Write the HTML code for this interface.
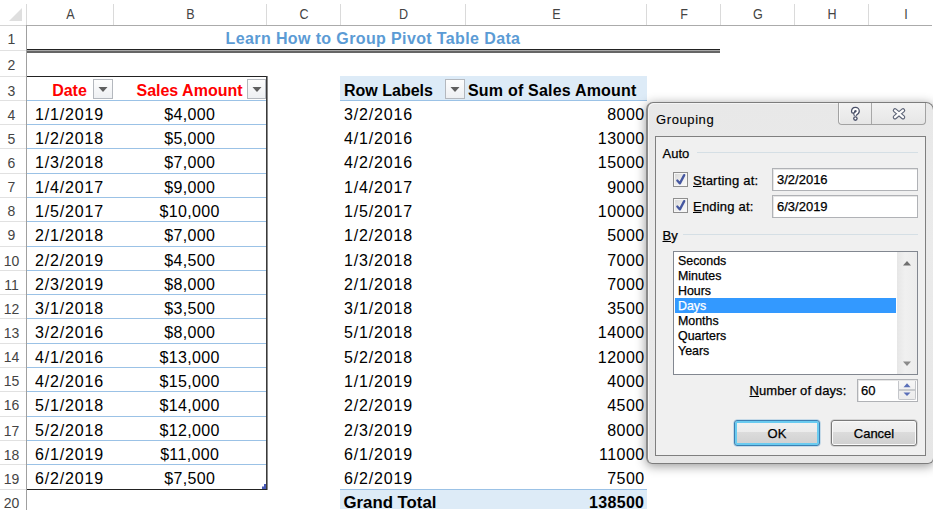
<!DOCTYPE html><html><head><meta charset="utf-8"><style>
*{margin:0;padding:0;box-sizing:border-box}
html,body{width:938px;height:515px;overflow:hidden;background:#fff}
body{position:relative;font-family:"Liberation Sans",sans-serif}
.a{position:absolute}
.t{white-space:nowrap}

.dd{width:20px;height:20px;border:1px solid #b4b8be;background:linear-gradient(#fdfdfd,#eef0f3)}
.dd svg{position:absolute;left:-1px;top:-1px}
.dlg{border:1px solid #7c7c7c;border-left:2px solid #8a8a8a;border-radius:7px 8px 6px 6px;background:linear-gradient(#e8e8e8,#ebebeb 40%,#e6e6e6);box-shadow:0 2px 11px rgba(0,0,0,.42),inset 1px 1px 0 #f4f4f4}
.cb{width:15px;height:15px;border:1px solid #8e8e8e;background:linear-gradient(135deg,#d6d6d6,#f0f0f0 60%,#fafafa);box-shadow:inset 0 0 0 1px #f6f6f6}
.cb svg{position:absolute;left:-1px;top:-1px}
.fld{border:1px solid #b0b2b6;background:#fff;box-shadow:inset 1px 1px 0 #e6e6e6}
.spin{border:1px solid #c9c9c9;background:linear-gradient(#f3f3f3,#e4e4e4)}
.btn{border:1px solid #7a7a7a;border-radius:3px;background:linear-gradient(#f2f2f2 0%,#ececec 45%,#dcdcdc 45%,#d0d0d0 100%);box-shadow:0 0 0 0.5px #b8b8b8,inset 0 0 0 1px #fafafa}
.ok{border-color:#3c7fb1;box-shadow:0 0 0 0.5px #9cc4e0,inset 0 0 0 2px #6acbf0}
</style></head><body>
<div class="a" style="left:0px;top:25px;width:26px;height:1px;background:#d5d5d5"></div>
<div class="a" style="left:26px;top:25px;width:906px;height:1px;background:#ababab"></div>
<svg class="a" style="left:0;top:0" width="26" height="25"><polygon points="9,21 22,8 22,21" fill="#dfdfdf"/></svg>
<div class="a" style="left:26px;top:4px;width:1px;height:21px;background:#dadada"></div>
<div class="a" style="left:113px;top:4px;width:1px;height:21px;background:#dadada"></div>
<div class="a" style="left:266px;top:4px;width:1px;height:21px;background:#dadada"></div>
<div class="a" style="left:340px;top:4px;width:1px;height:21px;background:#dadada"></div>
<div class="a" style="left:465px;top:4px;width:1px;height:21px;background:#dadada"></div>
<div class="a" style="left:646px;top:4px;width:1px;height:21px;background:#dadada"></div>
<div class="a" style="left:720px;top:4px;width:1px;height:21px;background:#dadada"></div>
<div class="a" style="left:794px;top:4px;width:1px;height:21px;background:#dadada"></div>
<div class="a" style="left:868px;top:4px;width:1px;height:21px;background:#dadada"></div>
<div class="a t" style="left:27px;top:-1px;height:30px;line-height:30px;font-size:14.6px;color:#444;width:87px;text-align:center;transform:scaleX(0.86);">A</div>
<div class="a t" style="left:114px;top:-1px;height:30px;line-height:30px;font-size:14.6px;color:#444;width:153px;text-align:center;transform:scaleX(0.86);">B</div>
<div class="a t" style="left:267px;top:-1px;height:30px;line-height:30px;font-size:14.6px;color:#444;width:74px;text-align:center;transform:scaleX(0.86);">C</div>
<div class="a t" style="left:341px;top:-1px;height:30px;line-height:30px;font-size:14.6px;color:#444;width:125px;text-align:center;transform:scaleX(0.86);">D</div>
<div class="a t" style="left:466px;top:-1px;height:30px;line-height:30px;font-size:14.6px;color:#444;width:181px;text-align:center;transform:scaleX(0.86);">E</div>
<div class="a t" style="left:647px;top:-1px;height:30px;line-height:30px;font-size:14.6px;color:#444;width:74px;text-align:center;transform:scaleX(0.86);">F</div>
<div class="a t" style="left:721px;top:-1px;height:30px;line-height:30px;font-size:14.6px;color:#444;width:74px;text-align:center;transform:scaleX(0.86);">G</div>
<div class="a t" style="left:795px;top:-1px;height:30px;line-height:30px;font-size:14.6px;color:#444;width:74px;text-align:center;transform:scaleX(0.86);">H</div>
<div class="a t" style="left:869px;top:-1px;height:30px;line-height:30px;font-size:14.6px;color:#444;width:74px;text-align:center;transform:scaleX(0.86);">I</div>
<div class="a" style="left:26px;top:25px;width:1px;height:485px;background:#a0a0a0"></div>
<div class="a" style="left:0px;top:50px;width:26px;height:1px;background:#e1e1e1"></div>
<div class="a t" style="left:0px;top:24px;height:30px;line-height:30px;font-size:14px;color:#444;width:23px;text-align:center;">1</div>
<div class="a" style="left:0px;top:76px;width:26px;height:1px;background:#e1e1e1"></div>
<div class="a t" style="left:0px;top:50px;height:30px;line-height:30px;font-size:14px;color:#444;width:23px;text-align:center;">2</div>
<div class="a" style="left:0px;top:100px;width:26px;height:1px;background:#e1e1e1"></div>
<div class="a t" style="left:0px;top:76px;height:30px;line-height:30px;font-size:14px;color:#444;width:23px;text-align:center;">3</div>
<div class="a" style="left:0px;top:124px;width:26px;height:1px;background:#e1e1e1"></div>
<div class="a t" style="left:0px;top:100px;height:30px;line-height:30px;font-size:14px;color:#444;width:23px;text-align:center;">4</div>
<div class="a" style="left:0px;top:148px;width:26px;height:1px;background:#e1e1e1"></div>
<div class="a t" style="left:0px;top:124px;height:30px;line-height:30px;font-size:14px;color:#444;width:23px;text-align:center;">5</div>
<div class="a" style="left:0px;top:173px;width:26px;height:1px;background:#e1e1e1"></div>
<div class="a t" style="left:0px;top:148px;height:30px;line-height:30px;font-size:14px;color:#444;width:23px;text-align:center;">6</div>
<div class="a" style="left:0px;top:197px;width:26px;height:1px;background:#e1e1e1"></div>
<div class="a t" style="left:0px;top:172px;height:30px;line-height:30px;font-size:14px;color:#444;width:23px;text-align:center;">7</div>
<div class="a" style="left:0px;top:221px;width:26px;height:1px;background:#e1e1e1"></div>
<div class="a t" style="left:0px;top:196px;height:30px;line-height:30px;font-size:14px;color:#444;width:23px;text-align:center;">8</div>
<div class="a" style="left:0px;top:246px;width:26px;height:1px;background:#e1e1e1"></div>
<div class="a t" style="left:0px;top:220px;height:30px;line-height:30px;font-size:14px;color:#444;width:23px;text-align:center;">9</div>
<div class="a" style="left:0px;top:270px;width:26px;height:1px;background:#e1e1e1"></div>
<div class="a t" style="left:0px;top:246px;height:30px;line-height:30px;font-size:14px;color:#444;width:23px;text-align:center;">10</div>
<div class="a" style="left:0px;top:294px;width:26px;height:1px;background:#e1e1e1"></div>
<div class="a t" style="left:0px;top:270px;height:30px;line-height:30px;font-size:14px;color:#444;width:23px;text-align:center;">11</div>
<div class="a" style="left:0px;top:318px;width:26px;height:1px;background:#e1e1e1"></div>
<div class="a t" style="left:0px;top:294px;height:30px;line-height:30px;font-size:14px;color:#444;width:23px;text-align:center;">12</div>
<div class="a" style="left:0px;top:343px;width:26px;height:1px;background:#e1e1e1"></div>
<div class="a t" style="left:0px;top:318px;height:30px;line-height:30px;font-size:14px;color:#444;width:23px;text-align:center;">13</div>
<div class="a" style="left:0px;top:367px;width:26px;height:1px;background:#e1e1e1"></div>
<div class="a t" style="left:0px;top:342px;height:30px;line-height:30px;font-size:14px;color:#444;width:23px;text-align:center;">14</div>
<div class="a" style="left:0px;top:391px;width:26px;height:1px;background:#e1e1e1"></div>
<div class="a t" style="left:0px;top:366px;height:30px;line-height:30px;font-size:14px;color:#444;width:23px;text-align:center;">15</div>
<div class="a" style="left:0px;top:416px;width:26px;height:1px;background:#e1e1e1"></div>
<div class="a t" style="left:0px;top:390px;height:30px;line-height:30px;font-size:14px;color:#444;width:23px;text-align:center;">16</div>
<div class="a" style="left:0px;top:440px;width:26px;height:1px;background:#e1e1e1"></div>
<div class="a t" style="left:0px;top:416px;height:30px;line-height:30px;font-size:14px;color:#444;width:23px;text-align:center;">17</div>
<div class="a" style="left:0px;top:464px;width:26px;height:1px;background:#e1e1e1"></div>
<div class="a t" style="left:0px;top:440px;height:30px;line-height:30px;font-size:14px;color:#444;width:23px;text-align:center;">18</div>
<div class="a" style="left:0px;top:489px;width:26px;height:1px;background:#e1e1e1"></div>
<div class="a t" style="left:0px;top:464px;height:30px;line-height:30px;font-size:14px;color:#444;width:23px;text-align:center;">19</div>
<div class="a t" style="left:0px;top:488px;height:30px;line-height:30px;font-size:14px;color:#444;width:23px;text-align:center;">20</div>
<div class="a t" style="left:26px;top:24px;height:30px;line-height:30px;font-size:16px;color:#5b9bd5;font-weight:bold;letter-spacing:0.38px;width:694px;text-align:center;">Learn How to Group Pivot Table Data</div>
<div class="a" style="left:27px;top:49px;width:693px;height:1px;background:#222"></div>
<div class="a" style="left:27px;top:50px;width:693px;height:1px;background:#a8a8a8"></div>
<div class="a" style="left:27px;top:51px;width:693px;height:2px;background:#666"></div>
<div class="a" style="left:27px;top:76px;width:240px;height:1px;background:#222"></div>
<div class="a" style="left:266px;top:76px;width:1px;height:414px;background:#3a3a3a"></div>
<div class="a" style="left:267px;top:76px;width:1px;height:414px;background:#8a8a8a"></div>
<div class="a" style="left:27px;top:489px;width:240px;height:1px;background:#222"></div>
<div class="a" style="left:27px;top:100px;width:239px;height:1px;background:#9bc2e6"></div>
<div class="a" style="left:27px;top:124px;width:239px;height:1px;background:#9bc2e6"></div>
<div class="a" style="left:27px;top:148px;width:239px;height:1px;background:#9bc2e6"></div>
<div class="a" style="left:27px;top:173px;width:239px;height:1px;background:#9bc2e6"></div>
<div class="a" style="left:27px;top:197px;width:239px;height:1px;background:#9bc2e6"></div>
<div class="a" style="left:27px;top:221px;width:239px;height:1px;background:#9bc2e6"></div>
<div class="a" style="left:27px;top:246px;width:239px;height:1px;background:#9bc2e6"></div>
<div class="a" style="left:27px;top:270px;width:239px;height:1px;background:#9bc2e6"></div>
<div class="a" style="left:27px;top:294px;width:239px;height:1px;background:#9bc2e6"></div>
<div class="a" style="left:27px;top:318px;width:239px;height:1px;background:#9bc2e6"></div>
<div class="a" style="left:27px;top:343px;width:239px;height:1px;background:#9bc2e6"></div>
<div class="a" style="left:27px;top:367px;width:239px;height:1px;background:#9bc2e6"></div>
<div class="a" style="left:27px;top:391px;width:239px;height:1px;background:#9bc2e6"></div>
<div class="a" style="left:27px;top:416px;width:239px;height:1px;background:#9bc2e6"></div>
<div class="a" style="left:27px;top:440px;width:239px;height:1px;background:#9bc2e6"></div>
<div class="a" style="left:27px;top:464px;width:239px;height:1px;background:#9bc2e6"></div>
<div class="a t" style="left:26px;top:76px;height:30px;line-height:30px;font-size:16px;color:#ff0000;font-weight:bold;width:87px;text-align:center;">Date</div>
<div class="a t" style="left:113px;top:76px;height:30px;line-height:30px;font-size:16px;color:#ff0000;font-weight:bold;width:153px;text-align:center;">Sales Amount</div>
<div class="a dd" style="left:93px;top:79px;width:20px"><svg width="20" height="20"><polygon points="5.5,8 14.5,8 10,13" fill="#5f5f5f"/></svg></div>
<div class="a dd" style="left:247px;top:79px;width:19px"><svg width="20" height="20"><polygon points="5.5,8 14.5,8 10,13" fill="#5f5f5f"/></svg></div>
<div class="a t" style="left:35px;top:100px;height:30px;line-height:30px;font-size:16px;color:#000;letter-spacing:0.85px;">1/1/2019</div>
<div class="a t" style="left:113.2px;top:100px;height:30px;line-height:30px;font-size:16px;color:#000;letter-spacing:0.35px;width:153px;text-align:center;">$4,000</div>
<div class="a t" style="left:35px;top:124px;height:30px;line-height:30px;font-size:16px;color:#000;letter-spacing:0.85px;">1/2/2018</div>
<div class="a t" style="left:113.2px;top:124px;height:30px;line-height:30px;font-size:16px;color:#000;letter-spacing:0.35px;width:153px;text-align:center;">$5,000</div>
<div class="a t" style="left:35px;top:148px;height:30px;line-height:30px;font-size:16px;color:#000;letter-spacing:0.85px;">1/3/2018</div>
<div class="a t" style="left:113.2px;top:148px;height:30px;line-height:30px;font-size:16px;color:#000;letter-spacing:0.35px;width:153px;text-align:center;">$7,000</div>
<div class="a t" style="left:35px;top:173px;height:30px;line-height:30px;font-size:16px;color:#000;letter-spacing:0.85px;">1/4/2017</div>
<div class="a t" style="left:113.2px;top:173px;height:30px;line-height:30px;font-size:16px;color:#000;letter-spacing:0.35px;width:153px;text-align:center;">$9,000</div>
<div class="a t" style="left:35px;top:197px;height:30px;line-height:30px;font-size:16px;color:#000;letter-spacing:0.85px;">1/5/2017</div>
<div class="a t" style="left:113.2px;top:197px;height:30px;line-height:30px;font-size:16px;color:#000;letter-spacing:0.35px;width:153px;text-align:center;">$10,000</div>
<div class="a t" style="left:35px;top:221px;height:30px;line-height:30px;font-size:16px;color:#000;letter-spacing:0.85px;">2/1/2018</div>
<div class="a t" style="left:113.2px;top:221px;height:30px;line-height:30px;font-size:16px;color:#000;letter-spacing:0.35px;width:153px;text-align:center;">$7,000</div>
<div class="a t" style="left:35px;top:246px;height:30px;line-height:30px;font-size:16px;color:#000;letter-spacing:0.85px;">2/2/2019</div>
<div class="a t" style="left:113.2px;top:246px;height:30px;line-height:30px;font-size:16px;color:#000;letter-spacing:0.35px;width:153px;text-align:center;">$4,500</div>
<div class="a t" style="left:35px;top:270px;height:30px;line-height:30px;font-size:16px;color:#000;letter-spacing:0.85px;">2/3/2019</div>
<div class="a t" style="left:113.2px;top:270px;height:30px;line-height:30px;font-size:16px;color:#000;letter-spacing:0.35px;width:153px;text-align:center;">$8,000</div>
<div class="a t" style="left:35px;top:294px;height:30px;line-height:30px;font-size:16px;color:#000;letter-spacing:0.85px;">3/1/2018</div>
<div class="a t" style="left:113.2px;top:294px;height:30px;line-height:30px;font-size:16px;color:#000;letter-spacing:0.35px;width:153px;text-align:center;">$3,500</div>
<div class="a t" style="left:35px;top:318px;height:30px;line-height:30px;font-size:16px;color:#000;letter-spacing:0.85px;">3/2/2016</div>
<div class="a t" style="left:113.2px;top:318px;height:30px;line-height:30px;font-size:16px;color:#000;letter-spacing:0.35px;width:153px;text-align:center;">$8,000</div>
<div class="a t" style="left:35px;top:343px;height:30px;line-height:30px;font-size:16px;color:#000;letter-spacing:0.85px;">4/1/2016</div>
<div class="a t" style="left:113.2px;top:343px;height:30px;line-height:30px;font-size:16px;color:#000;letter-spacing:0.35px;width:153px;text-align:center;">$13,000</div>
<div class="a t" style="left:35px;top:367px;height:30px;line-height:30px;font-size:16px;color:#000;letter-spacing:0.85px;">4/2/2016</div>
<div class="a t" style="left:113.2px;top:367px;height:30px;line-height:30px;font-size:16px;color:#000;letter-spacing:0.35px;width:153px;text-align:center;">$15,000</div>
<div class="a t" style="left:35px;top:391px;height:30px;line-height:30px;font-size:16px;color:#000;letter-spacing:0.85px;">5/1/2018</div>
<div class="a t" style="left:113.2px;top:391px;height:30px;line-height:30px;font-size:16px;color:#000;letter-spacing:0.35px;width:153px;text-align:center;">$14,000</div>
<div class="a t" style="left:35px;top:416px;height:30px;line-height:30px;font-size:16px;color:#000;letter-spacing:0.85px;">5/2/2018</div>
<div class="a t" style="left:113.2px;top:416px;height:30px;line-height:30px;font-size:16px;color:#000;letter-spacing:0.35px;width:153px;text-align:center;">$12,000</div>
<div class="a t" style="left:35px;top:440px;height:30px;line-height:30px;font-size:16px;color:#000;letter-spacing:0.85px;">6/1/2019</div>
<div class="a t" style="left:113.2px;top:440px;height:30px;line-height:30px;font-size:16px;color:#000;letter-spacing:0.35px;width:153px;text-align:center;">$11,000</div>
<div class="a t" style="left:35px;top:464px;height:30px;line-height:30px;font-size:16px;color:#000;letter-spacing:0.85px;">6/2/2019</div>
<div class="a t" style="left:113.2px;top:464px;height:30px;line-height:30px;font-size:16px;color:#000;letter-spacing:0.35px;width:153px;text-align:center;">$7,500</div>
<svg class="a" style="left:262px;top:484px" width="4" height="5"><path d="M2 0h2v5H0V2.5h2z" fill="#4657b4"/></svg>
<div class="a" style="left:340px;top:76px;width:307px;height:24px;background:#ddebf7"></div>
<div class="a" style="left:340px;top:100px;width:307px;height:1px;background:#9bc2e6"></div>
<div class="a t" style="left:344px;top:76px;height:30px;line-height:30px;font-size:16px;color:#000;font-weight:bold;">Row Labels</div>
<div class="a t" style="left:468px;top:76px;height:30px;line-height:30px;font-size:16px;color:#000;font-weight:bold;letter-spacing:0.2px;">Sum of Sales Amount</div>
<div class="a dd" style="left:445px;top:79px;width:20px"><svg width="20" height="20"><polygon points="5.5,8 14.5,8 10,13" fill="#5f5f5f"/></svg></div>
<div class="a t" style="left:344px;top:100px;height:30px;line-height:30px;font-size:16px;color:#000;letter-spacing:0.85px;">3/2/2016</div>
<div class="a t" style="left:465px;top:100px;height:30px;line-height:30px;font-size:16px;color:#000;letter-spacing:0.45px;width:179.6px;text-align:right;">8000</div>
<div class="a t" style="left:344px;top:124px;height:30px;line-height:30px;font-size:16px;color:#000;letter-spacing:0.85px;">4/1/2016</div>
<div class="a t" style="left:465px;top:124px;height:30px;line-height:30px;font-size:16px;color:#000;letter-spacing:0.45px;width:179.6px;text-align:right;">13000</div>
<div class="a t" style="left:344px;top:148px;height:30px;line-height:30px;font-size:16px;color:#000;letter-spacing:0.85px;">4/2/2016</div>
<div class="a t" style="left:465px;top:148px;height:30px;line-height:30px;font-size:16px;color:#000;letter-spacing:0.45px;width:179.6px;text-align:right;">15000</div>
<div class="a t" style="left:344px;top:173px;height:30px;line-height:30px;font-size:16px;color:#000;letter-spacing:0.85px;">1/4/2017</div>
<div class="a t" style="left:465px;top:173px;height:30px;line-height:30px;font-size:16px;color:#000;letter-spacing:0.45px;width:179.6px;text-align:right;">9000</div>
<div class="a t" style="left:344px;top:197px;height:30px;line-height:30px;font-size:16px;color:#000;letter-spacing:0.85px;">1/5/2017</div>
<div class="a t" style="left:465px;top:197px;height:30px;line-height:30px;font-size:16px;color:#000;letter-spacing:0.45px;width:179.6px;text-align:right;">10000</div>
<div class="a t" style="left:344px;top:221px;height:30px;line-height:30px;font-size:16px;color:#000;letter-spacing:0.85px;">1/2/2018</div>
<div class="a t" style="left:465px;top:221px;height:30px;line-height:30px;font-size:16px;color:#000;letter-spacing:0.45px;width:179.6px;text-align:right;">5000</div>
<div class="a t" style="left:344px;top:246px;height:30px;line-height:30px;font-size:16px;color:#000;letter-spacing:0.85px;">1/3/2018</div>
<div class="a t" style="left:465px;top:246px;height:30px;line-height:30px;font-size:16px;color:#000;letter-spacing:0.45px;width:179.6px;text-align:right;">7000</div>
<div class="a t" style="left:344px;top:270px;height:30px;line-height:30px;font-size:16px;color:#000;letter-spacing:0.85px;">2/1/2018</div>
<div class="a t" style="left:465px;top:270px;height:30px;line-height:30px;font-size:16px;color:#000;letter-spacing:0.45px;width:179.6px;text-align:right;">7000</div>
<div class="a t" style="left:344px;top:294px;height:30px;line-height:30px;font-size:16px;color:#000;letter-spacing:0.85px;">3/1/2018</div>
<div class="a t" style="left:465px;top:294px;height:30px;line-height:30px;font-size:16px;color:#000;letter-spacing:0.45px;width:179.6px;text-align:right;">3500</div>
<div class="a t" style="left:344px;top:318px;height:30px;line-height:30px;font-size:16px;color:#000;letter-spacing:0.85px;">5/1/2018</div>
<div class="a t" style="left:465px;top:318px;height:30px;line-height:30px;font-size:16px;color:#000;letter-spacing:0.45px;width:179.6px;text-align:right;">14000</div>
<div class="a t" style="left:344px;top:343px;height:30px;line-height:30px;font-size:16px;color:#000;letter-spacing:0.85px;">5/2/2018</div>
<div class="a t" style="left:465px;top:343px;height:30px;line-height:30px;font-size:16px;color:#000;letter-spacing:0.45px;width:179.6px;text-align:right;">12000</div>
<div class="a t" style="left:344px;top:367px;height:30px;line-height:30px;font-size:16px;color:#000;letter-spacing:0.85px;">1/1/2019</div>
<div class="a t" style="left:465px;top:367px;height:30px;line-height:30px;font-size:16px;color:#000;letter-spacing:0.45px;width:179.6px;text-align:right;">4000</div>
<div class="a t" style="left:344px;top:391px;height:30px;line-height:30px;font-size:16px;color:#000;letter-spacing:0.85px;">2/2/2019</div>
<div class="a t" style="left:465px;top:391px;height:30px;line-height:30px;font-size:16px;color:#000;letter-spacing:0.45px;width:179.6px;text-align:right;">4500</div>
<div class="a t" style="left:344px;top:416px;height:30px;line-height:30px;font-size:16px;color:#000;letter-spacing:0.85px;">2/3/2019</div>
<div class="a t" style="left:465px;top:416px;height:30px;line-height:30px;font-size:16px;color:#000;letter-spacing:0.45px;width:179.6px;text-align:right;">8000</div>
<div class="a t" style="left:344px;top:440px;height:30px;line-height:30px;font-size:16px;color:#000;letter-spacing:0.85px;">6/1/2019</div>
<div class="a t" style="left:465px;top:440px;height:30px;line-height:30px;font-size:16px;color:#000;letter-spacing:0.45px;width:179.6px;text-align:right;">11000</div>
<div class="a t" style="left:344px;top:464px;height:30px;line-height:30px;font-size:16px;color:#000;letter-spacing:0.85px;">6/2/2019</div>
<div class="a t" style="left:465px;top:464px;height:30px;line-height:30px;font-size:16px;color:#000;letter-spacing:0.45px;width:179.6px;text-align:right;">7500</div>
<div class="a" style="left:340px;top:489px;width:307px;height:1px;background:#9bc2e6"></div>
<div class="a" style="left:340px;top:490px;width:307px;height:19px;background:#ddebf7"></div>
<div class="a t" style="left:343.5px;top:488px;height:30px;line-height:30px;font-size:16.8px;color:#000;font-weight:bold;">Grand Total</div>
<div class="a t" style="left:465px;top:488px;height:30px;line-height:30px;font-size:16px;color:#000;font-weight:bold;letter-spacing:0.3px;width:179.3px;text-align:right;">138500</div>

<div class="a dlg" style="left:646px;top:102px;width:288px;height:362px"></div>
<div class="a" style="left:838px;top:103px;width:88px;height:22px;border:1px solid #a2a2a2;border-top:none;border-radius:0 0 4px 4px;background:linear-gradient(#f2f2f2,#e6e6e6);box-shadow:inset 1px 0 0 #f8f8f8"></div>
<div class="a" style="left:871px;top:103px;width:1px;height:21px;background:#a8a8a8"></div>
<div class="a" style="left:655px;top:136px;width:271px;height:320px;border:1px solid #7f7f7f;background:#f0f0f0"></div>

<div class="a t" style="left:656px;top:105px;height:30px;line-height:30px;font-size:13px;color:#000;letter-spacing:0.6px;-webkit-text-stroke:0.25px;-webkit-text-stroke:0.1px;">Grouping</div>
<svg class="a" style="left:845px;top:103px" width="20" height="20"><path d="M8.1 8.6C8.1 7 9.1 6 10.4 6C11.7 6 12.7 7 12.7 8.3C12.7 9.5 11.9 10.1 10.4 10.9L10.4 11.1" fill="none" stroke="#4a5068" stroke-width="4.4" stroke-linecap="round"/><path d="M8.1 8.6C8.1 7 9.1 6 10.4 6C11.7 6 12.7 7 12.7 8.3C12.7 9.5 11.9 10.1 10.4 10.9L10.4 11.8" fill="none" stroke="#fff" stroke-width="1.9" stroke-linecap="round"/><circle cx="10.4" cy="15.6" r="2.3" fill="#4a5068"/><circle cx="10.4" cy="15.6" r="1" fill="#fff"/></svg>
<svg class="a" style="left:889px;top:104px" width="20" height="20"><path d="M6 6.4L14 13.2M14 6.4L6 13.2" fill="none" stroke="#5d6477" stroke-width="4.5" stroke-linecap="round"/><path d="M6 6.4L14 13.2M14 6.4L6 13.2" fill="none" stroke="#fcfcfc" stroke-width="2.2" stroke-linecap="round"/></svg>
<div class="a t" style="left:662.5px;top:139px;height:30px;line-height:30px;font-size:13px;color:#000;-webkit-text-stroke:0.25px;">Auto</div>
<div class="a" style="left:697px;top:152px;width:221px;height:1px;background:#d5dfe5"></div>
<div class="a cb" style="left:673px;top:172px"><svg width="16" height="16"><path d="M4.3 8.5L6.9 11.4L11.2 3.1" fill="none" stroke="#4557a0" stroke-width="2.3" stroke-linecap="round" stroke-linejoin="round"/></svg></div>
<div class="a cb" style="left:673px;top:198px"><svg width="16" height="16"><path d="M4.3 8.5L6.9 11.4L11.2 3.1" fill="none" stroke="#4557a0" stroke-width="2.3" stroke-linecap="round" stroke-linejoin="round"/></svg></div>
<div class="a t" style="left:693px;top:166px;height:30px;line-height:30px;font-size:13px;color:#000;letter-spacing:0.2px;-webkit-text-stroke:0.25px;"><u>S</u>tarting at:</div>
<div class="a t" style="left:693px;top:192px;height:30px;line-height:30px;font-size:13px;color:#000;letter-spacing:0.2px;-webkit-text-stroke:0.25px;"><u>E</u>nding at:</div>
<div class="a fld" style="left:772px;top:168px;width:146px;height:23px"></div>
<div class="a fld" style="left:772px;top:195px;width:146px;height:23px"></div>
<div class="a t" style="left:777px;top:165px;height:30px;line-height:30px;font-size:13px;color:#000;-webkit-text-stroke:0.25px;">3/2/2016</div>
<div class="a t" style="left:777px;top:192px;height:30px;line-height:30px;font-size:13px;color:#000;-webkit-text-stroke:0.25px;">6/3/2019</div>
<div class="a t" style="left:662.5px;top:221px;height:30px;line-height:30px;font-size:13px;color:#000;-webkit-text-stroke:0.25px;"><u>B</u>y</div>
<div class="a" style="left:683px;top:234px;width:235px;height:1px;background:#d5dfe5"></div>
<div class="a" style="left:673px;top:251px;width:245px;height:124px;border:1px solid #828790;background:#fff"></div>
<div class="a" style="left:897px;top:252px;width:20px;height:122px;background:linear-gradient(90deg,#e6e6e6,#f0f0f0 40%,#ececec)"></div>
<svg class="a" style="left:896px;top:252px" width="21" height="122"><polygon points="7,13.5 11,9 15,13.5" fill="#6f6f6f"/><polygon points="7,109.5 11,114 15,109.5" fill="#8a8a8a"/></svg>
<div class="a" style="left:675px;top:298px;width:221px;height:15px;background:#3399ff"></div>
<div class="a t" style="left:678px;top:246px;height:30px;line-height:30px;font-size:12.4px;color:#000;-webkit-text-stroke:0.25px;">Seconds</div>
<div class="a t" style="left:678px;top:261px;height:30px;line-height:30px;font-size:12.4px;color:#000;-webkit-text-stroke:0.25px;">Minutes</div>
<div class="a t" style="left:678px;top:276px;height:30px;line-height:30px;font-size:12.4px;color:#000;-webkit-text-stroke:0.25px;">Hours</div>
<div class="a t" style="left:678px;top:291px;height:30px;line-height:30px;font-size:12.4px;color:#fff;-webkit-text-stroke:0.25px;">Days</div>
<div class="a t" style="left:678px;top:306px;height:30px;line-height:30px;font-size:12.4px;color:#000;-webkit-text-stroke:0.25px;">Months</div>
<div class="a t" style="left:678px;top:321px;height:30px;line-height:30px;font-size:12.4px;color:#000;-webkit-text-stroke:0.25px;">Quarters</div>
<div class="a t" style="left:678px;top:336px;height:30px;line-height:30px;font-size:12.4px;color:#000;-webkit-text-stroke:0.25px;">Years</div>
<div class="a t" style="left:749.5px;top:376px;height:30px;line-height:30px;font-size:13px;color:#000;letter-spacing:0.1px;-webkit-text-stroke:0.25px;"><u>N</u>umber of days:</div>
<div class="a fld" style="left:857px;top:379px;width:61px;height:23px"></div>
<div class="a t" style="left:861px;top:376px;height:30px;line-height:30px;font-size:13px;color:#000;-webkit-text-stroke:0.25px;">60</div>
<div class="a" style="left:898px;top:381px;width:18px;height:19px;border:1.5px solid #c4c6ca;border-top:none;border-radius:0 0 2px 2px;background:linear-gradient(#f6f6f6,#ececec)"></div>
<div class="a" style="left:899px;top:389px;width:16px;height:2px;background:#c8cacd"></div>
<svg class="a" style="left:898px;top:381px" width="18" height="19"><polygon points="5.5,6.2 9,2.3 12.5,6.2" fill="#5a6fb8"/><polygon points="5.5,11.5 9,15 12.5,11.5" fill="#5a6fb8"/></svg>
<div class="a btn ok" style="left:734px;top:420px;width:86px;height:26px"></div>
<div class="a btn" style="left:831px;top:420px;width:86px;height:26px"></div>
<div class="a t" style="left:734px;top:419px;height:30px;line-height:30px;font-size:13px;color:#000;width:86px;text-align:center;-webkit-text-stroke:0.25px;">OK</div>
<div class="a t" style="left:831px;top:419px;height:30px;line-height:30px;font-size:13px;color:#000;width:86px;text-align:center;-webkit-text-stroke:0.25px;">Cancel</div>
<div class="a" style="left:933px;top:80px;width:5px;height:420px;background:#fff"></div>
</body></html>
